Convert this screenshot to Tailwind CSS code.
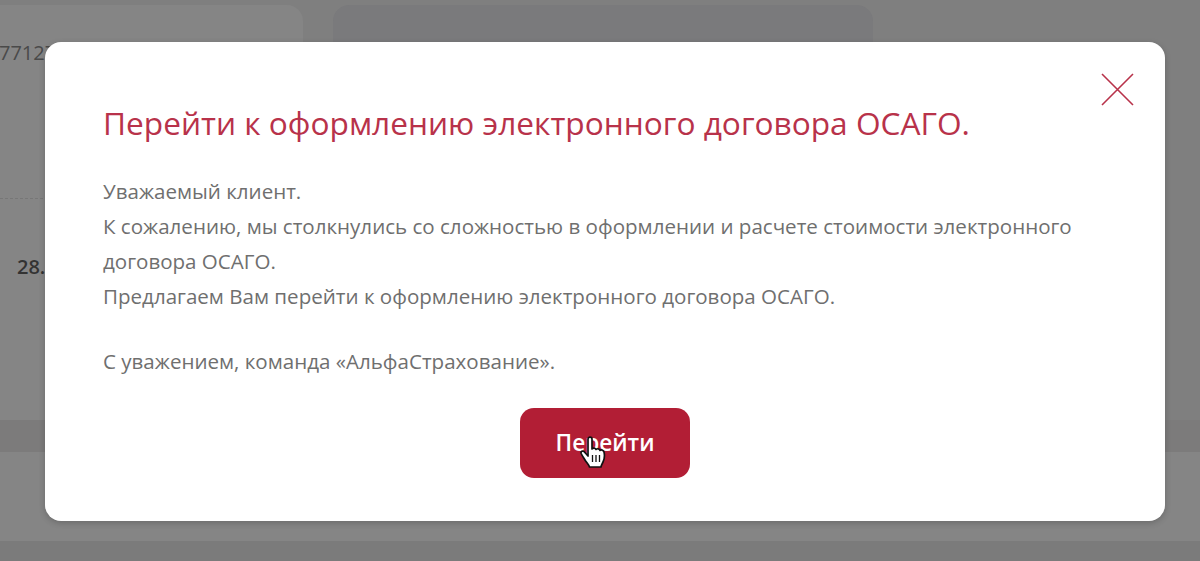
<!DOCTYPE html>
<html lang="ru">
<head>
    <meta charset="UTF-8">
    <title>Перейти к оформлению</title>
    <script src="https://cdn.jsdelivr.net/npm/@tailwindcss/browser@4"></script>
</head>
<body class="relative h-[561px] w-[1200px] overflow-hidden bg-[#7d7d7d] font-['Open_Sans',sans-serif]">
    <!-- Page behind the overlay -->
    <div class="flex h-[420px] gap-[30px] bg-[#7f7f7f] pt-[5px]">
        <div class="h-[415px] w-[303px] rounded-tr-[16px] bg-[#858585]">
            <p class="mt-[33px] -ml-[1px] text-[20px] text-[#4a4a4a]">771275</p>
            <div class="mt-[130px] border-t border-dashed border-[#777777]"></div>
            <p class="mt-[53px] ml-[17px] text-[20px] font-semibold text-[#333333]">28.01</p>
        </div>
        <div class="h-[120px] w-[540px] rounded-t-[16px] bg-[#7a7a7c]"></div>
    </div>
    <div class="h-[32px] bg-[#7c7b7b]"></div>
    <div class="h-[89px] bg-[#858585]"></div>
    <div class="h-[20px] bg-[#7b7b7b]"></div>

    <!-- Modal -->
    <div class="absolute top-[42px] left-[45px] h-[479px] w-[1120px] rounded-[16px] bg-white pt-[61px] pr-[58px] pl-[58px] shadow-[0_2px_6px_rgba(0,0,0,0.2)]">
        <button class="absolute top-[31px] right-[31px] h-[33px] w-[33px]">
            <svg viewBox="0 0 33 33" class="h-[33px] w-[33px]" fill="none" stroke="#b8324a" stroke-width="1.6"><path d="M1 1l31 31M32 1L1 32"/></svg>
        </button>
        <h2 class="text-[31.65px] leading-[40px] text-[#b8324a]">Перейти к оформлению электронного договора ОСАГО.</h2>
        <div class="mt-[31px] text-[20.55px] leading-[35px] text-[#6f6f6f]">
            <p>Уважаемый клиент.</p>
            <p>К сожалению, мы столкнулись со сложностью в оформлении и расчете стоимости электронного договора ОСАГО.</p>
            <p>Предлагаем Вам перейти к оформлению электронного договора ОСАГО.</p>
            <p class="mt-[30px]">С уважением, команда «АльфаСтрахование».</p>
        </div>
        <div class="mt-[29px] flex justify-center">
            <button class="relative h-[70px] w-[170px] rounded-[14px] bg-[#b21e35] text-[22.6px] font-[550] text-white">
                Перейти
                <svg viewBox="0 0 27 33" class="absolute top-[28px] left-[60px] h-[33px] w-[27px]">
                    <path d="M8 3c0-2.500 4-2.500 4 0V13c1-1.500 3.500-1.200 4 .5 1-1.200 3.500-1 4 1 1-1 3.500-.5 4 1.500.8 3.500.5 7-1 10-1.500 3-2 4-2 5H9.500c-.5-2-3-4.500-4.500-7-1.500-2.500-3-4.500-3.800-6.500-.7-2 1.500-3.200 3-1.800L8 20z" fill="#ffffff" stroke="#111111" stroke-width="1.700" stroke-linejoin="round"/>
                    <path d="M12.500 19v7M16 19v7M19.500 19v7" stroke="#111111" stroke-width="1.300" fill="none"/>
                </svg>
            </button>
        </div>
    </div>
</body>
</html>
